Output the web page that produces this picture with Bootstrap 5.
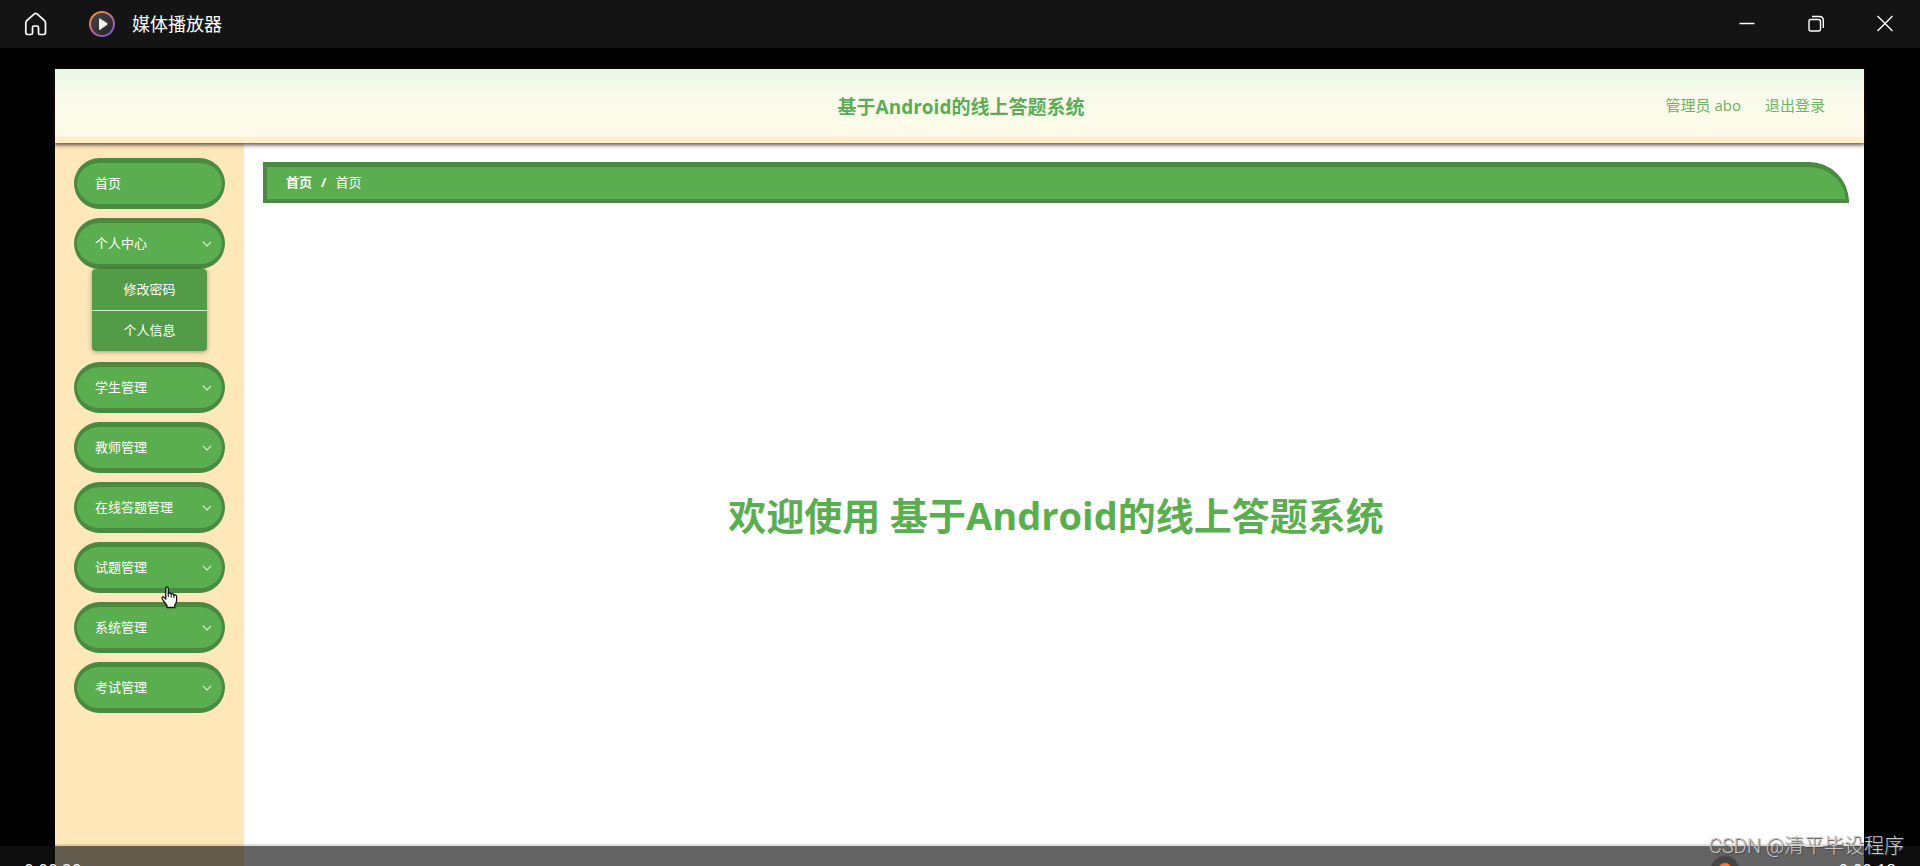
<!DOCTYPE html>
<html lang="zh-CN">
<head>
<meta charset="utf-8">
<meta name="viewport" content="width=device-width, initial-scale=1">
<title>媒体播放器</title>
<link href="https://cdn.jsdelivr.net/npm/bootstrap@5.3.0/dist/css/bootstrap.min.css" rel="stylesheet">
<script src="https://cdn.jsdelivr.net/npm/bootstrap@5.3.0/dist/js/bootstrap.bundle.min.js"></script>
<style>
  body { background: #000; font-family: "Open Sans", "Noto Sans CJK SC", sans-serif; font-size: 13px; }
  .player-window { height: 100vh; }
  .title-bar { background: #141414; height: 48px; padding-right: 1px; color: #fff; font-size: 18px; }
  .title-bar button { color: #fff; display: flex; align-items: center; justify-content: center; }
  .window-btn { width: 69px; height: 48px; }
  .home-btn { width: 72px; height: 48px; }
  .video-stage { padding: 21px 56px 0 55px; }
  .app-header { height: 74px; background: linear-gradient(#e8f7e5, #f8faea 35%, #fcfbea 70%, #fdf9e6);
    border-bottom: 6px solid #fef0c4; box-shadow: 0 1px 4px 1px rgba(40, 20, 30, .75); z-index: 1; }
  .app-header h1 { font-size: 19px; padding: 8px 0 0 3px; color: #5bac58; }
  .app-header a { font-size: 15px; color: #6db267; text-decoration: none; }
  .account { right: 39px; padding-top: 5px; }
  .side { width: 189px; padding: 15px 19px 0; background: #fee8ba; }
  .menu-list { gap: 9px; }
  .pill { height: 51px; padding: 0 10px 0 18px; background: #5bae50; color: #fff;
    border: solid #4a8a40; border-width: 5px 3px; border-radius: 26px; font-size: 13px; }
  .sub-menu { margin: 0 18px 2px 18px; border-radius: 4px; background: #529b47; box-shadow: 0 1px 5px rgba(0, 0, 0, .35); }
  .sub-menu a { height: 41px; color: #fff; text-decoration: none; }
  .sub-menu li + li a { border-top: 1px solid #d9edcf; }
  .page-area { padding: 19px 15px 0 19px; }
  .crumb-bar { height: 41px; padding: 0 19px; background: #5bae50; color: #fff;
    border: solid #4a8a40; border-width: 5px 3px 4px 4px; border-radius: 0 40px 0 0; gap: 9px; }
  .crumb-bar a { color: #fff; text-decoration: none; }
  .welcome { font-size: 38px; color: #5bae50; }
  .welcome-area { padding-bottom: 38px; }
  .controls { height: 22px; border-top: 2px solid rgba(0, 0, 0, .12); background: rgba(20, 20, 20, .66); background-clip: padding-box;
    color: #fff; font-size: 17px; line-height: 20px; z-index: 2; }
  .controls-row { padding: 14px 24px 0; }
  .knob { right: 180px; top: 9px; width: 30px; height: 30px; border-radius: 50%; background: #454545; border: 1px solid #5b5b5b; }
  .knob::after { content: ""; width: 14px; height: 14px; border-radius: 50%; background: #f3793a; }
  .watermark { right: 16px; bottom: 7px; font: 300 20px/26px Roboto, "Noto Sans CJK SC", sans-serif; color: #c8c8c8;
    text-shadow: 1px 1px 1px #444; z-index: 3; }
  .hand { left: 160px; top: 585px; z-index: 2; }
</style>
</head>
<body>
<div class="player-window d-flex flex-column position-relative overflow-hidden">
  <header class="title-bar d-flex align-items-center">
    <button class="btn home-btn p-0 border-0 rounded-0" type="button" aria-label="主页">
      <svg width="24" height="26" viewBox="0 0 24 26" fill="none" stroke="currentColor" stroke-width="1.7" stroke-linejoin="round"><path d="M10.4 2.9 3 9.4Q1.800 10.500 1.800 12V21.600Q1.800 23.500 3.600 23.500H7Q8.500 23.500 8.500 22V16.500Q8.500 15 10 15H13Q14.500 15 14.500 16.500V22Q14.500 23.500 16 23.500H19.700Q21.500 23.500 21.500 21.600V12Q21.500 10.500 20.300 9.400L13 2.900Q11.700 1.700 10.400 2.900Z"/></svg>
    </button>
    <svg class="ms-3" width="28" height="28" viewBox="0 0 28 28"><defs><linearGradient id="ring" x1="0" y1="0" x2=".7" y2="1"><stop offset=".1" stop-color="#ff8c3c"/><stop offset=".5" stop-color="#c76a8a"/><stop offset="1" stop-color="#8058cc"/></linearGradient><linearGradient id="disc" x1="0" y1="0" x2="1" y2="1"><stop stop-color="#484848"/><stop offset="1" stop-color="#222"/></linearGradient></defs><circle cx="14" cy="14" r="12" fill="url(#disc)" stroke="url(#ring)" stroke-width="2"/><path d="M11 9Q11 8 12 8.600L19 13Q20 14 19 15L12 19.800Q11 20.300 11 19Z" fill="#f2f2f2"/></svg>
    <span class="ms-3">媒体播放器</span>
    <div class="d-flex ms-auto">
      <button class="btn window-btn p-0 border-0 rounded-0" type="button" aria-label="最小化"><svg width="18" height="18" viewBox="0 0 18 18" stroke="currentColor" stroke-width="1.500"><path d="M1.500 8.500H16.500"/></svg></button>
      <button class="btn window-btn p-0 border-0 rounded-0" type="button" aria-label="还原"><svg width="18" height="18" viewBox="0 0 18 18" fill="none" stroke="currentColor" stroke-width="1.400"><rect x="2" y="4.500" width="11.500" height="11.500" rx="2"/><path d="M5 1.500H12.500Q16.300 1.500 16.300 5.500V13"/></svg></button>
      <button class="btn window-btn p-0 border-0 rounded-0" type="button" aria-label="关闭"><svg width="18" height="18" viewBox="0 0 18 18" stroke="currentColor" stroke-width="1.400"><path d="M1.500 1 16.500 16M16.500 1 1.500 16"/></svg></button>
    </div>
  </header>

  <div class="video-stage flex-grow-1 d-flex flex-column">
    <header class="app-header position-relative d-flex align-items-center justify-content-center">
      <h1 class="fw-bold m-0">基于Android的线上答题系统</h1>
      <nav class="account position-absolute d-flex">
        <a class="me-4" href="#">管理员 abo</a>
        <a href="#">退出登录</a>
      </nav>
    </header>
    <div class="flex-grow-1 d-flex">
      <nav class="side flex-shrink-0">
        <ul class="menu-list list-unstyled d-flex flex-column m-0">
          <li><button class="pill btn w-100 d-flex align-items-center" type="button">首页</button></li>
          <li>
            <button class="pill btn w-100 d-flex align-items-center justify-content-between" type="button">个人中心<svg width="10" height="6" viewBox="0 0 10 6" fill="none" stroke="#d9f0d0" stroke-width="1.200"><path d="M1 .8 5 4.800 9 .8"/></svg></button>
            <ul class="sub-menu list-unstyled">
              <li><a class="d-flex align-items-center justify-content-center" href="#">修改密码</a></li>
              <li><a class="d-flex align-items-center justify-content-center" href="#">个人信息</a></li>
            </ul>
          </li>
          <li><button class="pill btn w-100 d-flex align-items-center justify-content-between" type="button">学生管理<svg width="10" height="6" viewBox="0 0 10 6" fill="none" stroke="#d9f0d0" stroke-width="1.200"><path d="M1 .8 5 4.800 9 .8"/></svg></button></li>
          <li><button class="pill btn w-100 d-flex align-items-center justify-content-between" type="button">教师管理<svg width="10" height="6" viewBox="0 0 10 6" fill="none" stroke="#d9f0d0" stroke-width="1.200"><path d="M1 .8 5 4.800 9 .8"/></svg></button></li>
          <li><button class="pill btn w-100 d-flex align-items-center justify-content-between" type="button">在线答题管理<svg width="10" height="6" viewBox="0 0 10 6" fill="none" stroke="#d9f0d0" stroke-width="1.200"><path d="M1 .8 5 4.800 9 .8"/></svg></button></li>
          <li><button class="pill btn w-100 d-flex align-items-center justify-content-between" type="button">试题管理<svg width="10" height="6" viewBox="0 0 10 6" fill="none" stroke="#d9f0d0" stroke-width="1.200"><path d="M1 .8 5 4.800 9 .8"/></svg></button></li>
          <li><button class="pill btn w-100 d-flex align-items-center justify-content-between" type="button">系统管理<svg width="10" height="6" viewBox="0 0 10 6" fill="none" stroke="#d9f0d0" stroke-width="1.200"><path d="M1 .8 5 4.800 9 .8"/></svg></button></li>
          <li><button class="pill btn w-100 d-flex align-items-center justify-content-between" type="button">考试管理<svg width="10" height="6" viewBox="0 0 10 6" fill="none" stroke="#d9f0d0" stroke-width="1.200"><path d="M1 .8 5 4.800 9 .8"/></svg></button></li>
        </ul>
      </nav>
      <main class="page-area flex-grow-1 bg-white d-flex flex-column">
        <nav class="crumb-bar d-flex align-items-center" aria-label="breadcrumb">
          <a class="fw-bold" href="#">首页</a><span class="fw-bold">/</span><span>首页</span>
        </nav>
        <div class="welcome-area flex-grow-1 d-flex align-items-center justify-content-center">
          <h2 class="welcome fw-bold m-0">欢迎使用 基于Android的线上答题系统</h2>
        </div>
      </main>
    </div>
  </div>

  <svg class="hand position-absolute" width="20" height="24" viewBox="0 0 20 24" fill="#fff" stroke="#111" stroke-width="1.300" stroke-linejoin="round"><path d="M5.800 14V3.500Q5.800 1.800 7 1.800T8.300 3.500V9Q8.500 7.800 9.800 7.900T11.200 9.500Q11.400 8.500 12.600 8.700T13.900 10.400Q14.200 9.600 15.300 9.900T16.600 11.500V15.500Q16.600 18 14.800 20V22.500H6.900V20.500L3 15.200Q1.500 13 2.200 12.300Q3.200 11.300 4.500 12.700Z"/><path d="M8.300 9V12M11.200 9.500V12.500M13.900 10.400V13" fill="none" stroke-width="1"/></svg>

  <footer class="controls position-absolute bottom-0 start-0 end-0 overflow-hidden">
    <div class="controls-row d-flex justify-content-between"><span>0:00:20</span><span>0:00:18</span></div>
    <div class="knob position-absolute d-flex align-items-center justify-content-center"></div>
  </footer>
  <div class="watermark position-absolute">CSDN @清平毕设程序</div>
</div>
</body>
</html>
